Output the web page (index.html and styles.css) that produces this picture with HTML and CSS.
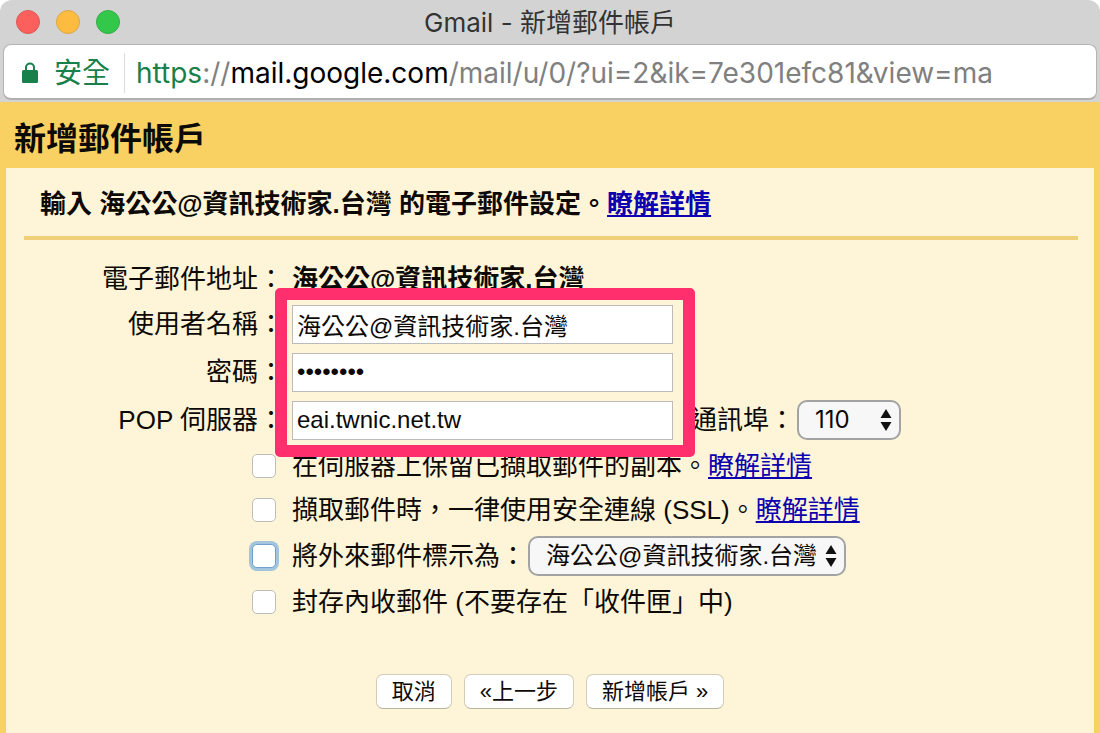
FILE: index.html
```html
<!DOCTYPE html>
<html lang="zh-TW">
<head>
<meta charset="utf-8">
<meta name="viewport" content="width=device-width, initial-scale=1">
<title>Gmail - 新增郵件帳戶</title>
<link rel="stylesheet" href="styles.css">
</head>
<body>
<div class="window">
  <header class="titlebar">
    <div class="lights">
      <button class="light light-close" type="button" aria-label="關閉"></button>
      <button class="light light-minimize" type="button" aria-label="縮小"></button>
      <button class="light light-zoom" type="button" aria-label="放大"></button>
    </div>
    <div class="window-title">Gmail - 新增郵件帳戶</div>
  </header>

  <div class="toolbar">
    <div class="address">
      <svg class="lock" viewBox="0 0 16 22" aria-hidden="true">
        <path d="M4 9V5.500a4 4 0 0 1 8 0V9" fill="none" stroke="#18804a" stroke-width="2"/>
        <rect x="0" y="8" width="16" height="13" rx="1.500" fill="#18804a"/>
      </svg>
      <span class="secure">安全</span>
      <span class="url"><span class="scheme">https</span>://<span class="host">mail.google.com</span>/mail/u/0/?ui=2&amp;ik=7e301efc81&amp;view=ma</span>
    </div>
  </div>

  <main class="page">
    <h1 class="page-title">新增郵件帳戶</h1>
    <form class="panel">
      <h2 class="intro">輸入 海公公@資訊技術家.台灣 的電子郵件設定。<a href="#settings">瞭解詳情</a></h2>

      <div class="row row-address">
        <span class="label">電子郵件地址：</span>
        <strong>海公公@資訊技術家.台灣</strong>
      </div>

      <div class="credentials">
        <div class="row">
          <label class="label" for="user">使用者名稱：</label>
          <input class="text" id="user" type="text" value="海公公@資訊技術家.台灣">
        </div>
        <div class="row">
          <label class="label" for="password">密碼：</label>
          <input class="text" id="password" type="password" value="password">
        </div>
        <div class="row">
          <label class="label" for="server">POP 伺服器：</label>
          <div class="server">
            <input class="text" id="server" type="text" value="eai.twnic.net.tw">
            <label class="port-label" for="port">通訊埠：</label>
            <span class="picker">
              <select class="select select-port" id="port"><option>110</option><option>995</option></select>
              <svg class="arrows" viewBox="0 0 12 22" aria-hidden="true"><path d="M6 0l5.500 9H.5zM6 22l5.500-9H.5z" fill="#111"/></svg>
            </span>
          </div>
        </div>
        <div class="highlight"></div>
      </div>

      <div class="row row-option">
        <input class="check" id="keep" type="checkbox">
        <div><label for="keep">在伺服器上保留已擷取郵件的副本。</label><a href="#keep-copy">瞭解詳情</a></div>
      </div>
      <div class="row row-option">
        <input class="check" id="ssl" type="checkbox">
        <div><label for="ssl">擷取郵件時，一律使用安全連線 (SSL)。</label><a href="#ssl-help">瞭解詳情</a></div>
      </div>
      <div class="row">
        <input class="check check-focus" id="tag" type="checkbox">
        <div class="tagging">
          <label for="tag">將外來郵件標示為：</label>
          <span class="picker">
            <select class="select select-tag" aria-label="標籤"><option>海公公@資訊技術家.台灣</option></select>
            <svg class="arrows" viewBox="0 0 12 22" aria-hidden="true"><path d="M6 0l5.500 9H.5zM6 22l5.500-9H.5z" fill="#111"/></svg>
          </span>
        </div>
      </div>
      <div class="row row-option">
        <input class="check" id="archive" type="checkbox">
        <label for="archive">封存內收郵件 (不要存在「收件匣」中)</label>
      </div>

      <div class="actions">
        <button class="button" type="button">取消</button>
        <button class="button" type="button">«上一步</button>
        <button class="button" type="button">新增帳戶 »</button>
      </div>
    </form>
  </main>
</div>
</body>
</html>
```
FILE: styles.css
```css
* {
  box-sizing: border-box;
}

body {
  margin: 0;
  background: #fff;
  color: #0d0906;
  font-family: "Liberation Sans", "Noto Sans CJK TC", sans-serif;
  font-size: 26px;
  line-height: 32px;
}

.window {
  display: flex;
  flex-direction: column;
  min-height: 100vh;
  border-radius: 12px 12px 0 0;
  overflow: hidden;
  white-space: nowrap;
}

.titlebar {
  display: grid;
  grid-template-columns: 1fr auto 1fr;
  align-items: center;
  height: 44px;
  padding: 0 16px;
  background: #d3d3d3;
}

.lights {
  display: flex;
  gap: 16px;
}

.light {
  width: 24px;
  height: 24px;
  padding: 0;
  border: 1px solid;
  border-radius: 50%;
}

.light-close {
  background: #fc605c;
  border-color: #dc5a57;
}

.light-minimize {
  background: #fdbc40;
  border-color: #dba64a;
}

.light-zoom {
  background: #34c84a;
  border-color: #35ac48;
}

.window-title {
  padding-top: 2px;
  color: #333;
  font-family: Inter, "Noto Sans CJK TC", sans-serif;
  font-size: 26px;
}

.toolbar {
  padding: 0 3px 2px;
  background: #d3d3d3;
}

.address {
  display: flex;
  align-items: center;
  height: 56px;
  padding: 2px 0 0 18px;
  border: 1px solid #b4b4b4;
  border-bottom: 2px solid #b0b0b0;
  border-radius: 8px;
  background: #fff;
  font-family: Inter, "Noto Sans CJK TC", sans-serif;
}

.lock {
  width: 16px;
  height: 22px;
}

.secure {
  margin-left: 16px;
  padding-right: 14px;
  border-right: 1px solid #dcdcdc;
  color: #18804a;
  font-size: 28px;
  line-height: 40px;
}

.url {
  margin-left: 11px;
  color: #808080;
  font-size: 28px;
}

.scheme {
  color: #18804a;
}

.host {
  color: #000;
}

.page {
  display: flex;
  flex: 1;
  flex-direction: column;
  padding: 0 6px;
  background: #f9d162;
}

.page-title {
  margin: 0;
  padding: 16px 8px 8px;
  font-size: 32px;
  line-height: 42px;
}

.panel {
  flex: 1;
  padding-bottom: 24px;
  background: #fef5d8;
}

.intro {
  margin: 0 16px 18px 18px;
  padding: 20px 16px 16px;
  border-bottom: 4px solid #efd078;
  font-size: 26px;
  line-height: 32px;
}

a {
  color: #0d00b0;
  text-decoration-thickness: 2px;
  text-underline-offset: 2px;
}

.row {
  display: grid;
  grid-template-columns: 278px 1fr;
  column-gap: 8px;
  align-items: center;
  height: 48px;
}

.row-address {
  height: 42px;
}

.row-option {
  height: 44px;
}

.label {
  text-align: right;
}

.credentials {
  position: relative;
}

.highlight {
  position: absolute;
  top: -12px;
  bottom: -13px;
  left: 269px;
  width: 420px;
  border: 12px solid #ff2f6e;
  border-radius: 5px;
  pointer-events: none;
}

.text {
  width: 381px;
  height: 39px;
  padding: 0 4px;
  border: 1px solid #bbb;
  background: #fff;
  color: #0d0906;
  font: inherit;
  font-size: 24px;
}

.server,
.tagging {
  display: flex;
  align-items: center;
}

.port-label {
  margin-left: 18px;
}

.picker {
  display: flex;
  position: relative;
  margin-left: 2px;
}

.select {
  height: 40px;
  padding: 0 16px;
  border: 2px solid #a3a3a3;
  border-radius: 10px;
  appearance: none;
  background: #f7f7f7;
  color: #0d0906;
  font: inherit;
  font-size: 24px;
}

.select-port {
  width: 104px;
  font-family: Inter, sans-serif;
}

.select-tag {
  width: 318px;
}

.arrows {
  position: absolute;
  top: 9px;
  right: 9px;
  width: 12px;
  height: 22px;
  pointer-events: none;
}

.check {
  justify-self: end;
  width: 24px;
  height: 24px;
  margin: 0 8px 0 0;
  border: 1px solid #bcbcb8;
  border-radius: 5px;
  appearance: none;
  background: #fff;
}

.check:checked {
  background: #3b88f7;
}

.check-focus {
  border-color: #6f9fcb;
  box-shadow: 0 0 0 3px #a3c4dd;
}

.actions {
  display: flex;
  justify-content: center;
  gap: 12px;
  margin-top: 50px;
}

.button {
  height: 35px;
  padding: 0 15px;
  border: 1px solid #d2ccb8;
  border-bottom-color: #b9b4a4;
  border-radius: 7px;
  background: #fff;
  color: #0d0906;
  font: inherit;
  font-size: 22px;
}
```
